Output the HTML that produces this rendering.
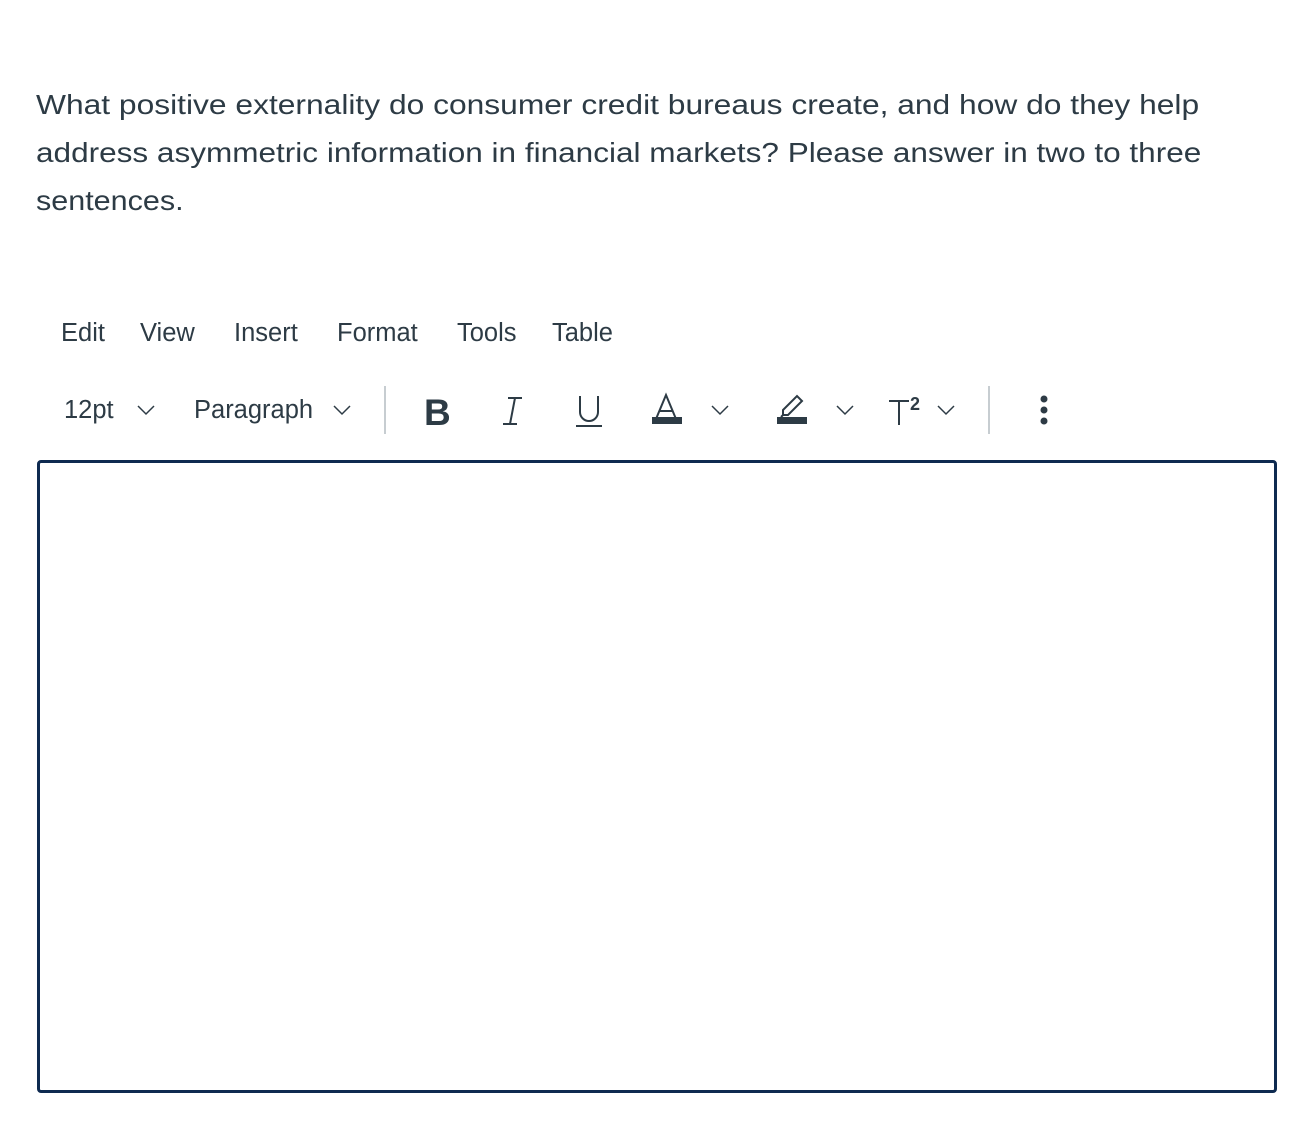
<!DOCTYPE html>
<html><head><meta charset="utf-8"><style>
body{margin:0;width:1306px;height:1122px;background:#fff;font-family:"Liberation Sans",sans-serif;color:#2d3b45;position:relative;overflow:hidden}
.l{position:absolute;left:36px;font-size:28px;white-space:nowrap;line-height:1;transform-origin:0 0}
.m{position:absolute;top:321px;font-size:25.5px;line-height:1}
.t{position:absolute;font-size:25.5px;line-height:1;top:398px}
.chev{position:absolute;top:404px}
.sep{position:absolute;top:386px;width:2px;height:48px;background:#c7cdd1}
.box{position:absolute;left:37px;top:460px;width:1234px;height:627px;border:3px solid #0e2a50;border-radius:4px}
</style></head><body>
<div class="l" style="top:91px;transform:scaleX(1.134)">What positive externality do consumer credit bureaus create, and how do they help</div>
<div class="l" style="top:139px;transform:scaleX(1.126)">address asymmetric information in financial markets? Please answer in two to three</div>
<div class="l" style="top:187px;transform:scaleX(1.09)">sentences.</div>

<div class="m" style="left:61px">Edit</div>
<div class="m" style="left:140px">View</div>
<div class="m" style="left:234px">Insert</div>
<div class="m" style="left:337px">Format</div>
<div class="m" style="left:457px">Tools</div>
<div class="m" style="left:552px">Table</div>

<div class="t" style="left:64px">12pt</div>
<svg class="chev" style="left:136px" width="20" height="12"><path d="M2 2l8 8 8-8" fill="none" stroke="#2d3b45" stroke-width="1.5"/></svg>
<div class="t" style="left:194px">Paragraph</div>
<svg class="chev" style="left:332px" width="20" height="12"><path d="M2 2l8 8 8-8" fill="none" stroke="#2d3b45" stroke-width="1.5"/></svg>
<div class="sep" style="left:384px"></div>
<svg style="position:absolute;left:420px;top:390px" width="300" height="40">
<text x="4" y="35" font-family="Liberation Sans" font-size="37" font-weight="bold" fill="#2d3b45">B</text>
<path d="M88 8h14M95 8l-5 26M83 34h14" stroke="#2d3b45" stroke-width="2" fill="none"/>
<path d="M160 6v16a9 9 0 0 0 18 0V6M156 36h26" stroke="#2d3b45" stroke-width="2" fill="none"/>
<path d="M236 29l10-24 10 24M240 21h13" stroke="#2d3b45" stroke-width="2" fill="none"/>
<rect x="232" y="27" width="30" height="7" fill="#2d3b45"/>
</svg>
<svg class="chev" style="left:710px" width="20" height="12"><path d="M2 2l8 8 8-8" fill="none" stroke="#2d3b45" stroke-width="1.5"/></svg>
<svg style="position:absolute;left:775px;top:390px" width="40" height="36">
<path d="M8 20l14-14 5 5-14 14h-5zM9 24l-3 3" stroke="#2d3b45" stroke-width="2" fill="none"/>
<rect x="2" y="27" width="30" height="7" fill="#2d3b45"/>
</svg>
<svg class="chev" style="left:835px" width="20" height="12"><path d="M2 2l8 8 8-8" fill="none" stroke="#2d3b45" stroke-width="1.5"/></svg>
<svg style="position:absolute;left:885px;top:390px" width="44" height="36">
<path d="M4 11h20M14 11v24" stroke="#2d3b45" stroke-width="2" fill="none"/>
<text x="25" y="20" font-family="Liberation Sans" font-size="18" font-weight="bold" fill="#2d3b45">2</text>
</svg>
<svg class="chev" style="left:936px" width="20" height="12"><path d="M2 2l8 8 8-8" fill="none" stroke="#2d3b45" stroke-width="1.5"/></svg>
<div class="sep" style="left:988px"></div>
<svg style="position:absolute;left:1036px;top:393px" width="16" height="34">
<circle cx="8" cy="6" r="3.5" fill="#2d3b45"/><circle cx="8" cy="17" r="3.5" fill="#2d3b45"/><circle cx="8" cy="28" r="3.5" fill="#2d3b45"/>
</svg>
<div class="box"></div>
</body></html>
